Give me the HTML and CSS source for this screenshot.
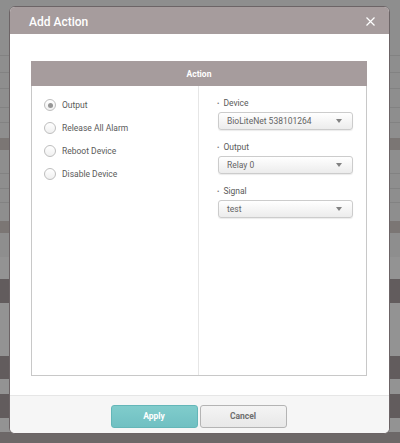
FILE: index.html
```html
<!DOCTYPE html>
<html>
  <head>
    <meta charset="UTF-8" />
    <meta name="viewport" content="width=device-width,initial-scale=1" />
    <title>Add Action</title>
    <link rel="stylesheet" href="styles.css">
  </head>
  <body>
    <!-- page behind the dialog, dimmed -->
    <div class="backdrop">
      <div class="row r55"></div>
      <div class="row r17 line"></div>
      <div class="row r16 line"></div>
      <div class="row r19 line"></div>
      <div class="row r15 line"></div>
      <div class="row r16 line"></div>
      <div class="row r12 tint"></div>
      <div class="row r23"></div>
      <div class="row r15 line"></div>
      <div class="row r14 line"></div>
      <div class="row r19 line"></div>
      <div class="row r12 tint"></div>
      <div class="row r24"></div>
      <div class="row r22 light"></div>
      <div class="row r24 dark"></div>
      <div class="row r53 light"></div>
      <div class="row r23 dark"></div>
      <div class="row r15 light"></div>
      <div class="row r24 dark"></div>
      <div class="row r14 light"></div>
      <div class="row r11 foot"></div>
    </div>

    <section class="modal">
      <header class="modal-header">
        <h1>Add Action</h1>
        <button class="close" type="button" aria-label="close">
          <svg width="9" height="9" viewBox="0 0 9 9">
            <path d="M0.5 0.5 L8.5 8.5 M8.5 0.5 L0.5 8.5" stroke="#fff" stroke-width="1.2" />
          </svg>
        </button>
      </header>

      <div class="modal-body">
        <div class="action-table">
          <div class="action-head">Action</div>
          <div class="action-cols">
            <ul class="radios">
              <li><span class="radio checked"></span>Output</li>
              <li><span class="radio"></span>Release All Alarm</li>
              <li><span class="radio"></span>Reboot Device</li>
              <li><span class="radio"></span>Disable Device</li>
            </ul>
            <ul class="fields">
              <li>
                <label>Device</label>
                <div class="select">BioLiteNet 538101264<span class="caret"></span></div>
              </li>
              <li>
                <label>Output</label>
                <div class="select">Relay 0<span class="caret"></span></div>
              </li>
              <li>
                <label>Signal</label>
                <div class="select">test<span class="caret"></span></div>
              </li>
            </ul>
          </div>
        </div>
      </div>

      <footer class="modal-footer">
        <button class="btn apply" type="button">Apply</button>
        <button class="btn cancel" type="button">Cancel</button>
      </footer>
    </section>
  </body>
</html>
```

FILE: styles.css
```css
:root {
  --color-header: rgb(166 156 157);
  --color-frame: rgb(108 100 102);
  --color-text: rgb(90 90 90);
  --color-border: rgb(200 200 200);
  --font-family: Roboto, "Liberation Sans", sans-serif;
}

* {
  box-sizing: border-box;
  margin: 0;
  padding: 0;
}

body {
  font-family: var(--font-family);
  height: 443px;
  overflow: hidden;
  position: relative;
  width: 400px;
}

ul {
  list-style-type: none;
}

button {
  font-family: var(--font-family);
}

/* dimmed table rows */
.backdrop {
  background-color: rgb(142 142 142);
  display: flex;
  flex-direction: column;
}

.row.line {
  border-top: 1px solid rgb(130 130 130);
}

.row.tint {
  background-color: rgb(123 118 116);
}

.row.light {
  background-color: rgb(147 147 147);
}

.row.dark {
  background-color: rgb(98 92 93);
}

.row.foot {
  background-color: rgb(109 104 104);
}

.r11 { height: 11px; }
.r12 { height: 12px; }
.r14 { height: 14px; }
.r15 { height: 15px; }
.r16 { height: 16px; }
.r17 { height: 17px; }
.r19 { height: 19px; }
.r22 { height: 22px; }
.r23 { height: 23px; }
.r24 { height: 24px; }
.r53 { height: 53px; }
.r55 { height: 55px; }

/* dialog */
.modal {
  background-color: rgb(255 255 255);
  border: 1px solid var(--color-frame);
  border-radius: 6px;
  display: flex;
  flex-direction: column;
  height: 428px;
  left: 9px;
  overflow: hidden;
  position: absolute;
  top: 6px;
  width: 381px;
}

.modal-header {
  align-items: center;
  background-color: var(--color-header);
  display: flex;
  flex: 0 0 27px;
  justify-content: space-between;
  padding: 3px 14px 0 19px;
}

.modal-header h1 {
  color: rgb(255 255 255);
  font-size: 12px;
  font-weight: 500;
}

.close {
  background-color: transparent;
  border-style: none;
  display: flex;
  margin-top: -1px;
}

.modal-body {
  flex: 1;
  padding: 27px 22px 19px 21px;
}

.action-table {
  border: 1px solid var(--color-border);
  display: flex;
  flex-direction: column;
  height: 100%;
}

.action-head {
  align-items: center;
  background-color: var(--color-header);
  color: rgb(255 255 255);
  display: flex;
  flex: 0 0 25px;
  font-size: 8.5px;
  font-weight: 700;
  justify-content: center;
  margin: -1px -1px 0;
  padding-top: 1px;
}

.action-cols {
  display: grid;
  flex: 1;
  grid-template-columns: 167px 1fr;
}

.radios {
  border-right: 1px solid rgb(230 230 230);
  display: flex;
  flex-direction: column;
  padding: 13px 0 0 12px;
  row-gap: 11px;
}

.radios li {
  align-items: center;
  color: var(--color-text);
  column-gap: 6px;
  display: flex;
  font-size: 8.5px;
  height: 12px;
}

.radio {
  align-items: center;
  background: linear-gradient(rgb(255 255 255), rgb(240 240 240));
  border: 1px solid rgb(190 190 190);
  border-radius: 50%;
  display: flex;
  height: 12px;
  justify-content: center;
  width: 12px;
}

.radio.checked::after {
  background-color: rgb(150 150 150);
  border-radius: 50%;
  content: "";
  height: 5px;
  width: 5px;
}

.fields {
  display: flex;
  flex-direction: column;
  padding: 12px 13px 0 18px;
  row-gap: 12px;
}

.fields li {
  display: flex;
  flex-direction: column;
  row-gap: 4px;
}

.fields label {
  color: var(--color-text);
  font-size: 8.5px;
}

.fields label::before {
  color: rgb(120 120 120);
  content: "•";
  font-size: 7px;
  margin-right: 4px;
}

.select {
  align-items: center;
  background: linear-gradient(rgb(255 255 255), rgb(236 236 236));
  border: 1px solid rgb(204 204 204);
  border-radius: 3px;
  box-shadow: 0 1px 1px rgb(0 0 0 / 0.08);
  color: rgb(100 100 100);
  display: flex;
  font-size: 8.5px;
  height: 18px;
  justify-content: space-between;
  margin-left: 1px;
  padding: 0 10px 0 8px;
}

.caret {
  border-left: 3px solid transparent;
  border-right: 3px solid transparent;
  border-top: 4px solid rgb(130 130 130);
  height: 0;
  width: 0;
}

/* buttons row */
.modal-footer {
  align-items: center;
  background-color: rgb(246 246 246);
  border-top: 1px solid rgb(230 230 230);
  column-gap: 2px;
  display: flex;
  flex: 0 0 38px;
  justify-content: center;
  padding: 3px 2px 0 0;
}

.btn {
  border-radius: 3px;
  font-size: 8.5px;
  font-weight: 700;
  height: 23px;
  width: 87px;
}

.apply {
  background: linear-gradient(rgb(128 204 204), rgb(112 192 194));
  border: 1px solid rgb(100 182 184);
  color: rgb(255 255 255);
}

.cancel {
  background: linear-gradient(rgb(244 244 244), rgb(232 232 232));
  border: 1px solid rgb(180 180 180);
  color: rgb(110 110 110);
}
```
